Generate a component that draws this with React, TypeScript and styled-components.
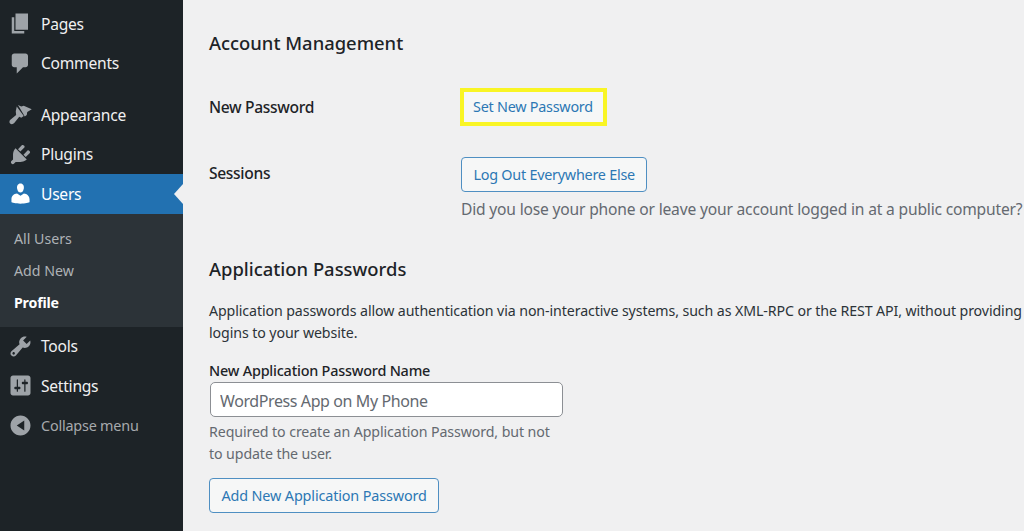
import { Fragment } from 'react';
import styled, { createGlobalStyle } from 'styled-components';

const GlobalStyle = createGlobalStyle`
    html, body {
        margin: 0;
        height: 100%;
        overflow: hidden;
        background: #f0f0f1;
        font-family: 'Noto Sans', 'Open Sans', Arial, sans-serif;
    }
`;

const Page = styled.div`
    display: flex;
    width: 1024px;
    height: 531px;
    overflow: hidden;
`;

const Sidebar = styled.nav`
    flex: 0 0 183px;
    display: flex;
    flex-direction: column;
    padding-top: 4px;
    background: #1d2327;
`;

const MenuItem = styled.a<{ $active?: boolean; $gapTop?: number }>`
    position: relative;
    display: flex;
    align-items: center;
    height: 39.5px;
    flex: none;
    margin-top: ${(p) => p.$gapTop ?? 0}px;
    padding-left: 8px;
    column-gap: 8px;
    font-size: 15.6px;
    letter-spacing: -0.25px;
    color: ${(p) => (p.$active ? '#fff' : '#f0f0f1')};
    background: ${(p) => (p.$active ? '#2271b1' : 'transparent')};
    svg {
        flex: none;
        width: 25px;
        height: 25px;
        fill: ${(p) => (p.$active ? '#fff' : '#9ea3a8')};
    }
    ${(p) =>
        p.$active &&
        `&::after {
            content: '';
            position: absolute;
            right: 0;
            top: 50%;
            margin-top: -10px;
            border: 10px solid transparent;
            border-left: 0;
            border-right: 9px solid #f0f0f1;
        }`}
`;

const CollapseItem = styled(MenuItem)`
    color: #a7aaad;
    font-size: 14.4px;
    letter-spacing: -0.2px;
`;

const SubMenu = styled.ul`
    flex: none;
    list-style: none;
    margin: 0;
    padding: 8.5px 0 8.5px;
    height: 113px;
    box-sizing: border-box;
    background: #2c3338;
    li {
        display: flex;
        align-items: center;
        height: 32px;
        padding-left: 14px;
        font-size: 14.2px;
        color: #aeb2b6;
    }
    li.current {
        color: #fff;
        font-weight: 700;
        letter-spacing: -0.2px;
    }
`;

const Main = styled.main`
    flex: 1;
    min-width: 0;
    padding: 31px 0 0 26px;
    color: #1d2327;
    overflow: hidden;
`;

const SectionTitle = styled.h2<{ $top?: number }>`
    margin: ${(p) => p.$top ?? 0}px 0 0;
    font-size: 18.4px;
    line-height: 24px;
    font-weight: 500;
    white-space: nowrap;
`;

const FormRow = styled.div<{ $top: number }>`
    display: grid;
    grid-template-columns: 252px 1fr;
    margin-top: ${(p) => p.$top}px;
`;

const RowLabel = styled.label<{ $top: number }>`
    padding-top: ${(p) => p.$top}px;
    font-size: 15.6px;
    line-height: 20px;
    font-weight: 500;
    letter-spacing: -0.33px;
`;

const Button = styled.button<{ $highlight?: boolean }>`
    display: inline-block;
    height: 35px;
    padding: 0 11.5px;
    font-family: inherit;
    font-size: 14.4px;
    line-height: 33px;
    letter-spacing: -0.25px;
    white-space: nowrap;
    color: #2c77b4;
    background: #f6f7f7;
    border: 1px solid #4f8fc2;
    border-radius: 4px;
    ${(p) =>
        p.$highlight &&
        `height: 38px;
         margin-left: -1px;
         padding: 0 10px 0 9px;
         line-height: 30px;
         border: 4px solid #f9f525;
         border-radius: 0;`}
`;

const AddButton = styled(Button)`
    letter-spacing: -0.14px;
`;

const Hint = styled.p`
    margin: 5px 0 0;
    font-size: 15.6px;
    line-height: 24px;
    letter-spacing: -0.18px;
    color: #646970;
    white-space: nowrap;
`;

const Intro = styled.p`
    margin: 19px 0 0;
    font-size: 14.2px;
    line-height: 22px;
    letter-spacing: -0.1px;
    color: #2c3338;
    white-space: nowrap;
`;

const FieldLabel = styled.label`
    display: block;
    margin-top: 17px;
    font-size: 14.4px;
    line-height: 20px;
    font-weight: 500;
    letter-spacing: -0.2px;
`;

const NameInput = styled.input`
    display: block;
    box-sizing: border-box;
    width: 353px;
    height: 35px;
    margin: 1px 0 0 1px;
    padding: 2px 9px 0;
    font-family: inherit;
    font-size: 16px;
    letter-spacing: -0.4px;
    background: #fff;
    border: 1px solid #8c8f94;
    border-radius: 5px;
    &::placeholder {
        color: #646970;
        opacity: 1;
    }
`;

const Description = styled.p`
    width: 354px;
    margin: 4px 0 13px;
    font-size: 14.2px;
    line-height: 22px;
    letter-spacing: -0.1px;
    color: #646970;
`;

const icons = {
    pages: 'M6 15V2h10v13H6zm-1 1h8v2H3V5h2v11z',
    comments:
        'M5 2h9c1.1 0 2 .9 2 2v7c0 1.1-.9 2-2 2h-2l-5 5v-5H5c-1.1 0-2-.9-2-2V4c0-1.1.9-2 2-2z',
    appearance:
        'M8 2.3l2.6 1.2 2-.6 6.4 2.8-3.6 2.2-.4 2.4-1.6 1.2zM7 3.6l5.6 7.6-2 1.4-1.6-.8-4 5c-.9 1.1-2.5 1.2-3.3.3-.8-.8-.7-2.2.2-3l4.6-3.7-.3-3z',
    plugins:
        'M13.11 4.36L9.87 7.6 8 5.73l3.24-3.24c.35-.34 1.05-.2 1.56.32.52.51.66 1.21.31 1.55zm-8 1.77l.91-1.12 9.01 9.01-1.19.84c-.71.71-2.63 1.16-3.82 1.16H6.14L4.9 17.26c-.59.59-1.54.59-2.12 0-.59-.58-.59-1.53 0-2.12l1.24-1.24v-3.88c0-1.13.4-3.19 1.09-3.89zm7.26 3.97l3.24-3.24c.34-.35 1.04-.21 1.55.31.52.51.66 1.21.31 1.55l-3.24 3.25z',
    users:
        'M10 9.25c-2.27 0-2.73-3.44-2.73-3.44C7 4.02 7.82 2 9.97 2c2.16 0 2.98 2.02 2.71 3.81 0 0-.41 3.44-2.68 3.44zm0 2.57L12.72 10c2.39 0 4.52 2.33 4.52 4.53v2.49s-3.65 1.13-7.24 1.13c-3.65 0-7.24-1.13-7.24-1.13v-2.49c0-2.25 1.94-4.48 4.47-4.48z',
    tools:
        'M16.68 9.77c-1.34 1.34-3.3 1.67-4.95.99l-5.41 6.52c-.99.99-2.59.99-3.58 0s-.99-2.59 0-3.57l6.52-5.42c-.68-1.65-.35-3.61.99-4.95 1.28-1.28 3.12-1.62 4.72-1.06l-2.89 2.89 2.82 2.82 2.86-2.87c.53 1.58.18 3.39-1.08 4.65zM3.81 16.21c.4.39 1.04.39 1.43 0 .4-.4.4-1.04 0-1.43-.39-.4-1.03-.4-1.43 0-.39.39-.39 1.03 0 1.43z',
    settings:
        'M18 16V4c0-1.1-.9-2-2-2H4c-1.1 0-2 .9-2 2v12c0 1.1.9 2 2 2h12c1.1 0 2-.9 2-2zM8 11h1c.55 0 1 .45 1 1s-.45 1-1 1H8v1.5c0 .28-.22.5-.5.5s-.5-.22-.5-.5V13H6c-.55 0-1-.45-1-1s.45-1 1-1h1V5.5c0-.28.22-.5.5-.5s.5.22.5.5V11zm5-2h-1c-.55 0-1-.45-1-1s.45-1 1-1h1V5.5c0-.28.22-.5.5-.5s.5.22.5.5V7h1c.55 0 1 .45 1 1s-.45 1-1 1h-1v5.5c0 .28-.22.5-.5.5s-.5-.22-.5-.5V9z',
    collapse: 'M18 10c0-4.42-3.58-8-8-8s-8 3.58-8 8 3.58 8 8 8 8-3.58 8-8zm-5 4l-6-4 6-4v8z',
};

const Icon = ({ name }: { name: keyof typeof icons }) => (
    <svg viewBox="0 0 20 20" xmlns="http://www.w3.org/2000/svg">
        <path d={icons[name]} />
    </svg>
);

const App = () => {
    return (
        <Fragment>
            <GlobalStyle />
            <Page>
                <Sidebar>
                    <MenuItem>
                        <Icon name="pages" />
                        Pages
                    </MenuItem>
                    <MenuItem>
                        <Icon name="comments" />
                        Comments
                    </MenuItem>
                    <MenuItem $gapTop={12}>
                        <Icon name="appearance" />
                        Appearance
                    </MenuItem>
                    <MenuItem>
                        <Icon name="plugins" />
                        Plugins
                    </MenuItem>
                    <MenuItem $active>
                        <Icon name="users" />
                        Users
                    </MenuItem>
                    <SubMenu>
                        <li>All Users</li>
                        <li>Add New</li>
                        <li className="current">Profile</li>
                    </SubMenu>
                    <MenuItem>
                        <Icon name="tools" />
                        Tools
                    </MenuItem>
                    <MenuItem>
                        <Icon name="settings" />
                        Settings
                    </MenuItem>
                    <CollapseItem>
                        <Icon name="collapse" />
                        Collapse menu
                    </CollapseItem>
                </Sidebar>
                <Main>
                    <SectionTitle>Account Management</SectionTitle>
                    <FormRow $top={33}>
                        <RowLabel $top={9}>New Password</RowLabel>
                        <div>
                            <Button $highlight>Set New Password</Button>
                        </div>
                    </FormRow>
                    <FormRow $top={31}>
                        <RowLabel $top={6}>Sessions</RowLabel>
                        <div>
                            <Button>Log Out Everywhere Else</Button>
                            <Hint>Did you lose your phone or leave your account logged in at a public computer?</Hint>
                        </div>
                    </FormRow>
                    <SectionTitle $top={36}>Application Passwords</SectionTitle>
                    <Intro>
                        Application passwords allow authentication via non-interactive systems, such as XML-RPC or the REST API, without providing
                        <br />
                        logins to your website.
                    </Intro>
                    <FieldLabel>New Application Password Name</FieldLabel>
                    <NameInput placeholder="WordPress App on My Phone" />
                    <Description>Required to create an Application Password, but not to update the user.</Description>
                    <AddButton>Add New Application Password</AddButton>
                </Main>
            </Page>
        </Fragment>
    );
};

export default App;
